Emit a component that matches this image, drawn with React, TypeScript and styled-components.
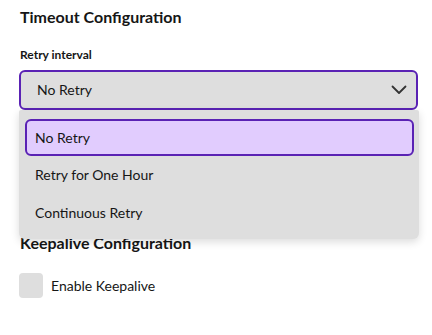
import React from "react";
import styled, { createGlobalStyle } from "styled-components";

const Global = createGlobalStyle`
  html, body { margin: 0; padding: 0; background: #ffffff; }
  body { font-family: Lato, "Open Sans", sans-serif; color: #1a1a1a; }
  * { box-sizing: border-box; }
`;

const Page = styled.div`
  width: 432px;
  height: 335px;
  padding: 7px 14px 0 19px;
  overflow: hidden;
`;

const SectionTitle = styled.h2<{ $top?: number }>`
  margin: ${(p) => p.$top ?? 0}px 0 0 1px;
  font-size: 16px;
  line-height: 1.2;
  font-weight: 700;
  color: #161616;
`;

const FieldLabel = styled.div`
  margin: 22px 0 7px 1px;
  font-size: 12px;
  line-height: 1.2;
  font-weight: 700;
  color: #161616;
`;

const SelectWrap = styled.div`
  position: relative;
  width: 399px;
`;

const SelectBox = styled.div`
  height: 40px;
  border: 2px solid #5a22b4;
  border-radius: 6px;
  background: #dedede;
  display: flex;
  align-items: center;
  justify-content: space-between;
  padding: 0 9px 0 16px;
  font-size: 14px;
  color: #161616;
`;

const Menu = styled.div`
  position: absolute;
  top: 40px;
  left: 0;
  right: -1px;
  height: 129px;
  background: #dedede;
  border-radius: 2px 2px 6px 6px;
  box-shadow: 0 3px 8px rgba(0, 0, 0, 0.14);
  padding: 9px 5px 7px 6px;
  display: flex;
  flex-direction: column;
  gap: 0.5px;
  z-index: 2;
`;

const Option = styled.div<{ $active?: boolean }>`
  height: 37px;
  display: flex;
  align-items: center;
  padding: 0 8px;
  border-radius: 6px;
  font-size: 14px;
  color: #161616;
  border: 2px solid ${(p) => (p.$active ? "#5a22b4" : "transparent")};
  background: ${(p) => (p.$active ? "#e1ccfe" : "transparent")};
`;

const CheckRow = styled.label`
  margin-top: 21px;
  display: flex;
  align-items: center;
  gap: 8px;
  font-size: 14px;
  color: #161616;
`;

const CheckBox = styled.span`
  width: 24px;
  height: 25px;
  border-radius: 4px;
  background: #dedede;
  display: inline-block;
`;

const Chevron = () => (
  <svg width="16" height="10" viewBox="0 0 16 10" fill="none">
    <polyline
      points="1.5,1.5 8,8 14.5,1.5"
      stroke="#333"
      strokeWidth="1.8"
      strokeLinecap="round"
      strokeLinejoin="round"
    />
  </svg>
);

export default function App() {
  return (
    <>
      <Global />
      <Page>
        <SectionTitle>Timeout Configuration</SectionTitle>
        <FieldLabel>Retry interval</FieldLabel>
        <SelectWrap>
          <SelectBox>
            <span>No Retry</span>
            <Chevron />
          </SelectBox>
          <Menu>
            <Option $active>No Retry</Option>
            <Option>Retry for One Hour</Option>
            <Option>Continuous Retry</Option>
          </Menu>
        </SelectWrap>
        <SectionTitle $top={123}>Keepalive Configuration</SectionTitle>
        <CheckRow>
          <CheckBox />
          <span>Enable Keepalive</span>
        </CheckRow>
      </Page>
    </>
  );
}
